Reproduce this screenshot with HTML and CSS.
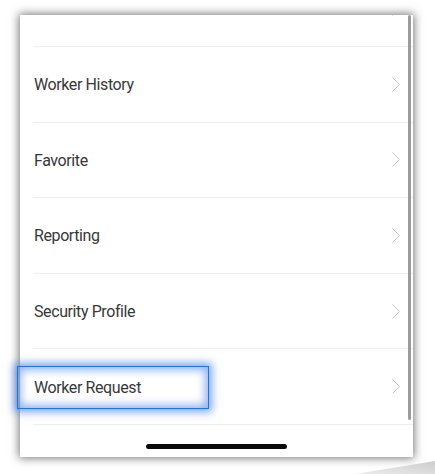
FILE: index.html
```html
<!DOCTYPE html>
<html>
<head>
<meta charset="utf-8">
<link rel="stylesheet" href="styles.css">
</head>
<body>
<div class="stage">
  <div class="phone">
    <div class="list">
      <ul class="menu">
        <li class="row"><span class="label"></span><svg class="chev" width="8" height="15" viewBox="0 0 8 15"><polyline points="0.5,0.5 7.5,7.5 0.5,14.5"/></svg></li>
        <li class="row"><span class="label">Worker History</span><svg class="chev" width="8" height="15" viewBox="0 0 8 15"><polyline points="0.5,0.5 7.5,7.5 0.5,14.5"/></svg></li>
        <li class="row"><span class="label">Favorite</span><svg class="chev" width="8" height="15" viewBox="0 0 8 15"><polyline points="0.5,0.5 7.5,7.5 0.5,14.5"/></svg></li>
        <li class="row"><span class="label">Reporting</span><svg class="chev" width="8" height="15" viewBox="0 0 8 15"><polyline points="0.5,0.5 7.5,7.5 0.5,14.5"/></svg></li>
        <li class="row"><span class="label">Security Profile</span><svg class="chev" width="8" height="15" viewBox="0 0 8 15"><polyline points="0.5,0.5 7.5,7.5 0.5,14.5"/></svg></li>
        <li class="row"><span class="label">Worker Request</span><svg class="chev" width="8" height="15" viewBox="0 0 8 15"><polyline points="0.5,0.5 7.5,7.5 0.5,14.5"/></svg></li>
      </ul>
    </div>
    <div class="home-area"><div class="home-bar"></div></div>
    <div class="scrollbar"></div>
    <div class="focus-ring"></div>
  </div>
  <svg class="wedge" width="80" height="16" viewBox="0 0 80 16">
    <defs>
      <linearGradient id="wg" x1="0" y1="1" x2="1" y2="0">
        <stop offset="0" stop-color="#ececec"/>
        <stop offset="1" stop-color="#cdcdcd"/>
      </linearGradient>
    </defs>
    <polygon points="0,16 80,3 80,16" fill="url(#wg)"/>
  </svg>
</div>
</body>
</html>
```

FILE: styles.css
```css
html, body {
  margin: 0;
  padding: 0;
  background: #ffffff;
}

.stage {
  position: relative;
  width: 435px;
  height: 474px;
  overflow: hidden;
  padding-top: 15px;
  box-sizing: border-box;
}

.phone {
  position: relative;
  margin-left: 20px;
  width: 393px;
  height: 442px;
  background: #ffffff;
  box-shadow: 0 0 9px 1px rgba(0, 0, 0, 0.55);
  display: flex;
  flex-direction: column;
}

.list {
  flex: 1;
  overflow: hidden;
}

.menu {
  list-style: none;
  margin: -43.6px 0 0 0;
  padding: 0;
}

.row {
  height: 75.6px;
  box-sizing: border-box;
  margin-left: 13px;
  padding-right: 13px;
  border-bottom: 1px solid #efefef;
  display: flex;
  align-items: center;
  justify-content: space-between;
}

.label {
  font-family: Roboto, "Liberation Sans", sans-serif;
  font-size: 16px;
  letter-spacing: -0.4px;
  color: #383838;
  padding-left: 1px;
  padding-top: 1px;
}

.chev polyline {
  fill: none;
  stroke: #c6c6c6;
  stroke-width: 1;
}

.home-area {
  height: 30px;
  display: flex;
  align-items: flex-end;
  justify-content: center;
  padding-bottom: 8px;
  box-sizing: border-box;
}

.home-bar {
  width: 141px;
  height: 5px;
  border-radius: 3px;
  background: #0a0a0a;
}

.scrollbar {
  position: absolute;
  top: 0;
  right: 2px;
  width: 3px;
  height: 405px;
  border-radius: 1.5px;
  background: #9c9c9c;
}

.focus-ring {
  position: absolute;
  left: -3px;
  top: 351px;
  width: 192px;
  height: 43px;
  box-sizing: border-box;
  border: 1px solid #1f78d8;
  box-shadow: 0 0 8px 3px rgba(70, 125, 225, 0.7), inset 0 0 8px 3px rgba(70, 125, 225, 0.6);
}

.wedge {
  position: absolute;
  right: 0;
  bottom: 0;
}
```
